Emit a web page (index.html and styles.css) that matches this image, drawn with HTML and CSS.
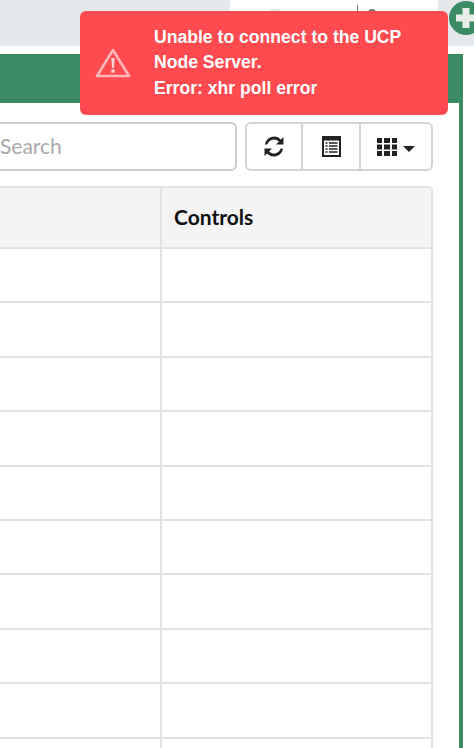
FILE: index.html
```html
<!DOCTYPE html>
<html lang="en">
<head>
    <meta charset="UTF-8">
    <meta name="viewport" content="width=device-width, initial-scale=1.0">
    <title>UCP Node Server</title>
    <link rel="stylesheet" href="styles.css">
</head>
<body>

    <div class="topbar">
        <div class="topbar-left"></div>
        <div class="topbar-middle">
            <span class="topbar-mark"></span>
            <span class="topbar-divider"></span>
            <span class="topbar-user"></span>
        </div>
        <div class="topbar-right"></div>
    </div>

    <a class="add-circle" href="#">
        <svg viewBox="0 0 34 34" width="34" height="34">
            <circle cx="17" cy="17" r="17" fill="#3a8a64"/>
            <path d="M13.500 7h7v6.500H27v7h-6.500V27h-7v-6.500H7v-7h6.500z" fill="#e8efeb"/>
        </svg>
    </a>

    <div class="panel">
        <div class="panel-title"></div>
        <div class="panel-body">
            <div class="toolbar">
                <input class="search" type="text" placeholder="Search">
                <div class="btn-group">
                    <button class="btn btn-refresh">
                        <svg viewBox="0 0 20 21" width="20" height="21">
                            <path d="M19.500 1v7.500H12l2.900-2.900A7 7 0 0 0 3.300 8.500H1A9.300 9.300 0 0 1 17 3.500z" fill="#222"/>
                            <path d="M.5 20v-7.500H8l-2.900 2.900A7 7 0 0 0 16.700 12.500H19A9.300 9.300 0 0 1 3 17.500z" fill="#222"/>
                        </svg>
                    </button>
                    <button class="btn btn-list">
                        <svg viewBox="0 0 19 21" width="19" height="21">
                            <rect x="1" y="1" width="17" height="19" fill="none" stroke="#222" stroke-width="2"/>
                            <rect x="1" y="1" width="17" height="3.500" fill="#222"/>
                            <path d="M3.500 7h2M7 7h8.500M3.500 10h2M7 10h8.500M3.500 13h2M7 13h8.500M3.500 16h2M7 16h8.500" stroke="#222" stroke-width="1.500"/>
                        </svg>
                    </button>
                    <button class="btn btn-columns">
                        <svg class="grid-icon" viewBox="0 0 20 18" width="20" height="18">
                            <path d="M0 0h5v5H0zM7 0h6v5H7zM15 0h5v5h-5zM0 6.500h5v5H0zM7 6.500h6v5H7zM15 6.500h5v5h-5zM0 13h5v5H0zM7 13h6v5H7zM15 13h5v5h-5z" fill="#222"/>
                        </svg>
                        <span class="caret"></span>
                    </button>
                </div>
            </div>

            <table class="data-table">
                <thead>
                    <tr>
                        <th></th>
                        <th>Controls</th>
                    </tr>
                </thead>
                <tbody>
                    <tr><td></td><td></td></tr>
                    <tr><td></td><td></td></tr>
                    <tr><td></td><td></td></tr>
                    <tr><td></td><td></td></tr>
                    <tr><td></td><td></td></tr>
                    <tr><td></td><td></td></tr>
                    <tr><td></td><td></td></tr>
                    <tr><td></td><td></td></tr>
                    <tr><td></td><td></td></tr>
                    <tr><td></td><td></td></tr>
                </tbody>
            </table>
        </div>
    </div>

    <div class="toast">
        <svg class="toast-icon" viewBox="0 0 36 32" width="36" height="32">
            <path d="M18 3 L34 29 H2 Z" fill="none" stroke="#ffb5b7" stroke-width="2.600" stroke-linejoin="round"/>
            <path d="M16.300 11h3.400l-.7 10h-2z" fill="#ffd5d6"/>
            <rect x="16.300" y="22.500" width="3.400" height="3.200" fill="#ffd5d6"/>
        </svg>
        <div class="toast-text">
            <div>Unable to connect to the UCP Node Server.</div>
            <div>Error: xhr poll error</div>
        </div>
    </div>

</body>
</html>
```

FILE: styles.css
```css
html,
body {
    height: 100%;
    overflow: hidden;
}

body {
    font-family: "Lato", Arial, sans-serif;
    margin: 0;
    padding: 0;
    background-color: white;
    position: relative;
    display: flex;
    flex-direction: column;
}

.topbar {
    display: flex;
    flex-shrink: 0;
    height: 46px;
}

.topbar-left {
    width: 230px;
    background-color: #e4e8eb;
}

.topbar-middle {
    display: flex;
    align-items: flex-start;
    width: 208px;
    background-color: white;
    padding: 5px 0 0 40px;
    box-sizing: border-box;
}

.topbar-mark {
    width: 10px;
    height: 2px;
    margin: 4px 77px 0 0;
    background-color: #e6e6e6;
}

.topbar-divider {
    width: 1px;
    height: 20px;
    background-color: #5f7a70;
}

.topbar-user {
    width: 8px;
    height: 8px;
    margin: 4px 0 0 10px;
    border-radius: 50%;
    background-color: #777;
}

.topbar-right {
    flex: 1;
    background-color: #e4e8eb;
}

.add-circle {
    position: absolute;
    top: 1px;
    left: 449px;
    line-height: 0;
}

.panel {
    display: flex;
    flex-direction: column;
    flex: 1;
    min-height: 0;
    margin-top: 8px;
    width: 463px;
}

.panel-title {
    flex-shrink: 0;
    height: 49px;
    background-color: #3a8a64;
}

.panel-body {
    flex: 1;
    min-height: 0;
    overflow: hidden;
    border-right: 4px solid #3a8a64;
    padding: 19px 26px 0 0;
}

.toolbar {
    display: flex;
    gap: 8px;
    margin-left: -10px;
}

.search {
    width: 247px;
    height: 49px;
    box-sizing: border-box;
    border: 2px solid #ccc;
    border-radius: 6px;
    padding: 0 8px 2px;
    font-family: "Lato", Arial, sans-serif;
    font-size: 21px;
    color: #333;
}

.search::placeholder {
    color: #a9a9a9;
    opacity: 1;
}

.btn-group {
    display: flex;
    width: 188px;
    height: 49px;
    box-sizing: border-box;
    border: 2px solid #d4d4d4;
    border-radius: 6px;
}

.btn {
    display: flex;
    align-items: center;
    justify-content: center;
    background: white;
    border: none;
    border-right: 2px solid #d4d4d4;
    padding: 0;
    width: 57px;
}

.btn-refresh {
    width: 56px;
    border-radius: 5px 0 0 5px;
}

.btn-list {
    width: 58px;
}

.btn-columns {
    flex: 1;
    gap: 6px;
    border-right: none;
    border-radius: 0 5px 5px 0;
}

.caret {
    width: 0;
    height: 0;
    margin-top: 4px;
    border-left: 6px solid transparent;
    border-right: 6px solid transparent;
    border-top: 6px solid #222;
}

.data-table {
    margin-top: 15px;
    margin-left: -10px;
    width: 443px;
    table-layout: fixed;
    border-collapse: separate;
    border-spacing: 0;
    border-top: 2px solid #e2e2e2;
    border-right: 2px solid #e2e2e2;
    border-radius: 5px 5px 0 0;
}

.data-table th {
    height: 56px;
    padding: 0 0 3px 12px;
    background-color: #f4f4f4;
    text-align: left;
    font-size: 21px;
    font-weight: bold;
    color: #111;
    border-bottom: 2px solid #e2e2e2;
}

.data-table th:first-child {
    width: 158px;
    border-right: 2px solid #e2e2e2;
}

.data-table td:first-child {
    border-right: 2px solid #e2e2e2;
}

.data-table td {
    height: 52.400px;
    padding: 0;
    border-bottom: 2px solid #e2e2e2;
}

.toast {
    position: absolute;
    top: 11px;
    left: 80px;
    width: 368px;
    height: 104px;
    box-sizing: border-box;
    display: flex;
    align-items: center;
    padding: 0 30px 0 15px;
    background-color: #ff4b4f;
    border-radius: 6px;
    color: #fff;
    font-family: "Liberation Sans", Arial, sans-serif;
    font-size: 17.600px;
    font-weight: bold;
    line-height: 25.600px;
}

.toast-icon {
    flex-shrink: 0;
    margin-right: 23px;
}
```
